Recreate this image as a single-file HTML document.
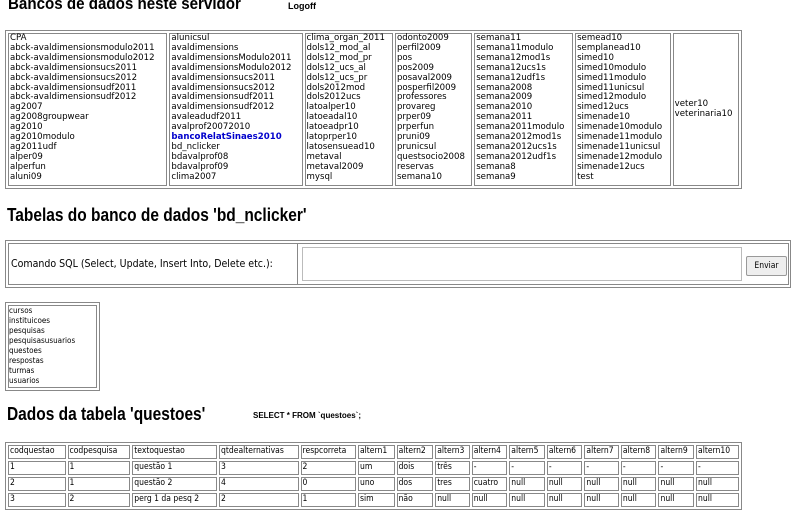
<!DOCTYPE html>
<html><head><meta charset="utf-8">
<style>
body{margin:0;width:800px;height:500px;overflow:hidden;background:#fff;font-family:"DejaVu Sans",Verdana,sans-serif;color:#000;position:relative}
.h{position:absolute;font-family:"Liberation Sans",sans-serif;font-weight:bold;font-size:18px;transform:scaleX(.86);transform-origin:left top;white-space:nowrap}
.s{position:absolute;font-family:"Liberation Sans",sans-serif;font-weight:bold;font-size:9px;white-space:nowrap}
table{border-collapse:separate;border:1px solid #888;border-spacing:2px;position:absolute}
td{border:1px solid #888;vertical-align:top;padding:0 1px}
.db td{font-size:8.6px;line-height:9.9px;white-space:nowrap}
.db td.m{vertical-align:middle}
a{color:#00c;font-weight:bold}
.dt{table-layout:fixed}
.dt td{font-size:8.5px;height:12px;padding:0 1px;white-space:nowrap;overflow:hidden;font-family:"DejaVu Sans Condensed","DejaVu Sans",sans-serif}
</style></head><body>
<div class="h" style="left:8px;top:-6px;font-size:17px;transform:scaleX(.89)">Bancos de dados neste servidor</div>
<div class="s" style="left:288px;top:1px">Logoff</div>

<table class="db" style="left:5px;top:30px;width:737px;height:159px">
<tr>
<td>CPA<br>abck-avaldimensionsmodulo2011<br>abck-avaldimensionsmodulo2012<br>abck-avaldimensionsucs2011<br>abck-avaldimensionsucs2012<br>abck-avaldimensionsudf2011<br>abck-avaldimensionsudf2012<br>ag2007<br>ag2008groupwear<br>ag2010<br>ag2010modulo<br>ag2011udf<br>alper09<br>alperfun<br>aluni09</td>
<td>alunicsul<br>avaldimensions<br>avaldimensionsModulo2011<br>avaldimensionsModulo2012<br>avaldimensionsucs2011<br>avaldimensionsucs2012<br>avaldimensionsudf2011<br>avaldimensionsudf2012<br>avaleadudf2011<br>avalprof20072010<br><a>bancoRelatSinaes2010</a><br>bd_nclicker<br>bdavalprof08<br>bdavalprof09<br>clima2007</td>
<td>clima_organ_2011<br>dols12_mod_al<br>dols12_mod_pr<br>dols12_ucs_al<br>dols12_ucs_pr<br>dols2012mod<br>dols2012ucs<br>latoalper10<br>latoeadal10<br>latoeadpr10<br>latoprper10<br>latosensuead10<br>metaval<br>metaval2009<br>mysql</td>
<td>odonto2009<br>perfil2009<br>pos<br>pos2009<br>posaval2009<br>posperfil2009<br>professores<br>provareg<br>prper09<br>prperfun<br>pruni09<br>prunicsul<br>questsocio2008<br>reservas<br>semana10</td>
<td>semana11<br>semana11modulo<br>semana12mod1s<br>semana12ucs1s<br>semana12udf1s<br>semana2008<br>semana2009<br>semana2010<br>semana2011<br>semana2011modulo<br>semana2012mod1s<br>semana2012ucs1s<br>semana2012udf1s<br>semana8<br>semana9</td>
<td>semead10<br>semplanead10<br>simed10<br>simed10modulo<br>simed11modulo<br>simed11unicsul<br>simed12modulo<br>simed12ucs<br>simenade10<br>simenade10modulo<br>simenade11modulo<br>simenade11unicsul<br>simenade12modulo<br>simenade12ucs<br>test</td>
<td class="m">veter10<br>veterinaria10</td>
</tr></table>

<div class="h" style="left:7px;top:205px">Tabelas do banco de dados 'bd_nclicker'</div>

<div style="position:absolute;left:5px;top:240px;width:784px;height:46px;border:1px solid #888"></div>
<div style="position:absolute;left:8px;top:243px;width:286px;height:40px;border:1px solid #888;font-family:'DejaVu Sans Condensed','DejaVu Sans',sans-serif;font-size:10.5px;line-height:40px;padding-left:2px;white-space:nowrap;overflow:hidden">Comando SQL (Select, Update, Insert Into, Delete etc.):</div>
<div style="position:absolute;left:297px;top:243px;width:490px;height:40px;border:1px solid #888"></div>
<div style="position:absolute;left:302px;top:247px;width:438px;height:32px;border:1px solid #bbb"></div>
<div style="position:absolute;left:746px;top:256px;width:39px;height:18px;border:1px solid #999;border-radius:2px;background:#eee;font-size:8.5px;line-height:18px;text-align:center;font-family:'DejaVu Sans Condensed',sans-serif">Enviar</div>

<table class="db" style="left:5px;top:302px;width:95px;height:89px">
<tr><td style="font-size:8px;line-height:10px;padding:0;font-family:'DejaVu Sans Condensed','DejaVu Sans',sans-serif">cursos<br>instituicoes<br>pesquisas<br>pesquisasusuarios<br>questoes<br>respostas<br>turmas<br>usuarios</td></tr></table>

<div class="h" style="left:7px;top:404px">Dados da tabela 'questoes'</div>
<div class="s" style="left:253px;top:411px;font-size:8px">SELECT * FROM `questoes`;</div>

<table class="dt" style="left:5px;top:442px;width:737px">
<colgroup><col style="width:55px"><col style="width:60px"><col style="width:81px"><col style="width:76px"><col style="width:53px"><col style="width:35px"><col style="width:35px"><col style="width:33px"><col style="width:34px"><col style="width:34px"><col style="width:34px"><col style="width:33px"><col style="width:34px"><col style="width:34px"><col style="width:41px"></colgroup>
<tr><td>codquestao</td><td>codpesquisa</td><td>textoquestao</td><td>qtdealternativas</td><td>respcorreta</td><td>altern1</td><td>altern2</td><td>altern3</td><td>altern4</td><td>altern5</td><td>altern6</td><td>altern7</td><td>altern8</td><td>altern9</td><td>altern10</td></tr>
<tr><td>1</td><td>1</td><td>questão 1</td><td>3</td><td>2</td><td>um</td><td>dois</td><td>três</td><td>-</td><td>-</td><td>-</td><td>-</td><td>-</td><td>-</td><td>-</td></tr>
<tr><td>2</td><td>1</td><td>questão 2</td><td>4</td><td>0</td><td>uno</td><td>dos</td><td>tres</td><td>cuatro</td><td>null</td><td>null</td><td>null</td><td>null</td><td>null</td><td>null</td></tr>
<tr><td>3</td><td>2</td><td>perg 1 da pesq 2</td><td>2</td><td>1</td><td>sim</td><td>não</td><td>null</td><td>null</td><td>null</td><td>null</td><td>null</td><td>null</td><td>null</td><td>null</td></tr>
</table>
</body></html>
